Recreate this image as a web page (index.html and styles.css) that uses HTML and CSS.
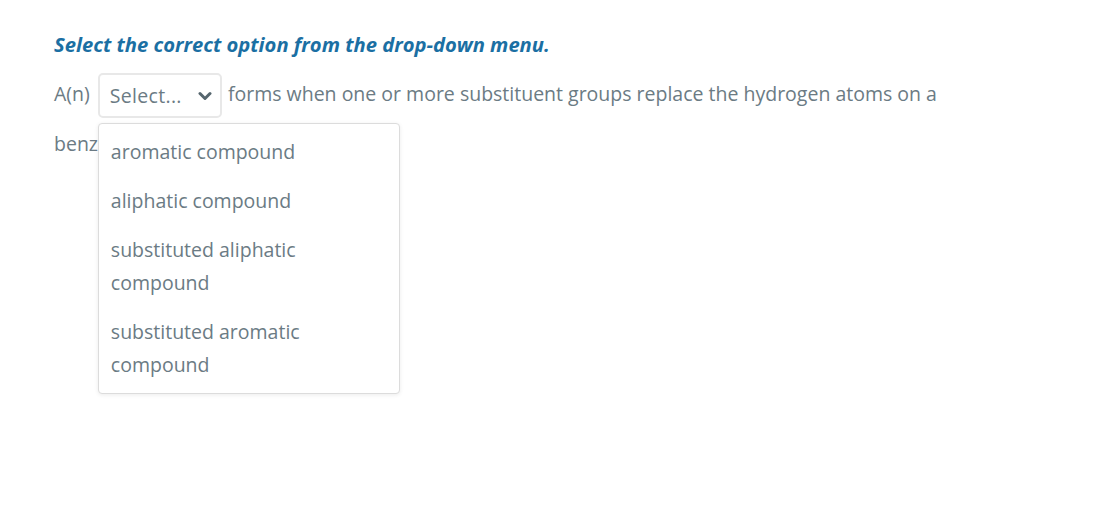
FILE: index.html
```html
<!DOCTYPE html>
<html lang="en">
<head>
<meta charset="UTF-8">
<meta name="viewport" content="width=device-width, initial-scale=1.0">
<title>Drop-down question</title>
<link rel="stylesheet" href="styles.css">
</head>
<body>

<div class="question">
    <div class="prompt">Select the correct option from the drop-down menu.</div>
    <div class="sentence">A(n)
        <span class="select-wrap">
            <span class="select-box">
                <span class="select-label">Select...</span>
                <svg class="chevron" width="14" height="10" viewBox="0 0 14 10"><path d="M2 2.5l5 5 5-5" fill="none" stroke="#56666e" stroke-width="3" stroke-linecap="round" stroke-linejoin="round"/></svg>
            </span>
            <span class="menu">
                <span class="option">aromatic compound</span>
                <span class="option">aliphatic compound</span>
                <span class="option">substituted aliphatic compound</span>
                <span class="option">substituted aromatic compound</span>
            </span>
        </span>
        forms when one or more substituent groups replace the hydrogen atoms on a benzene ring.</div>
</div>

</body>
</html>
```

FILE: styles.css
```css
html, body {
    min-height: 100vh;
}

body {
    margin: 0;
    background: #fff;
    font-family: "Open Sans", "Liberation Sans", sans-serif;
    color: #6b7b84;
}

.question {
    padding: 29px 54px 0 54px;
    width: 890px;
}

.prompt {
    margin: 0 0 10px 0;
    font-size: 20.2px;
    line-height: 30px;
    font-weight: bold;
    font-style: italic;
    color: #1b6fa3;
}

.sentence {
    font-size: 19.5px;
    line-height: 50px;
}

.select-wrap {
    position: relative;
    display: inline-block;
    vertical-align: middle;
    margin: 0 1px 0 3px;
}

.select-box {
    display: flex;
    align-items: center;
    justify-content: space-between;
    box-sizing: border-box;
    width: 124px;
    height: 45px;
    padding: 0 8px 0 10px;
    border: 2px solid #e8e8e8;
    border-radius: 5px;
    line-height: 1;
}

.select-label {
    letter-spacing: 0.3px;
}

.chevron {
    display: block;
}

.menu {
    position: absolute;
    top: 50px;
    left: 0;
    display: flex;
    flex-direction: column;
    box-sizing: border-box;
    width: 302px;
    padding: 3px 0 4px 0;
    background: #fff;
    border: 1px solid #dcdcdc;
    border-radius: 4px;
    box-shadow: 0 1px 4px rgba(0, 0, 0, 0.08);
    z-index: 2;
}

.option {
    padding: 8px 12px;
    line-height: 33px;
}
```
